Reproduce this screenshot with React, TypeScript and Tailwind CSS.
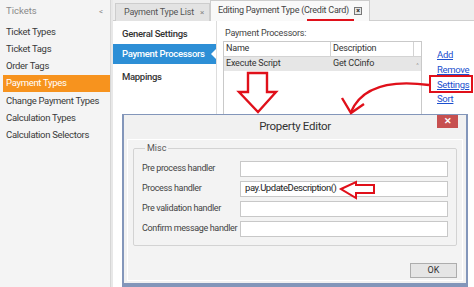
import React from 'react'

const sideItems = [
  'Ticket Types',
  'Ticket Tags',
  'Order Tags',
  'Payment Types',
  'Change Payment Types',
  'Calculation Types',
  'Calculation Selectors',
]

const navItems = ['General Settings', 'Payment Processors', 'Mappings']

const links = ['Add', 'Remove', 'Settings', 'Sort']

const handlers = [
  { label: 'Pre process handler', value: '' },
  { label: 'Process handler', value: 'pay.UpdateDescription()' },
  { label: 'Pre validation handler', value: '' },
  { label: 'Confirm message handler', value: '' },
]

function Sidebar() {
  return (
    <div className="w-[111px] shrink-0 bg-[#f4f4f4] border-r border-[#d6d6d6] pl-[3px] flex flex-col">
      <div className="h-[23px] flex items-center justify-between pl-[3px] pr-[7px] text-[#8a8a8a] text-[9.5px]">
        <span>Tickets</span>
        <span className="text-[8px]">&lt;</span>
      </div>
      {sideItems.map((item) => (
        <div
          key={item}
          className={
            item === 'Payment Types'
              ? 'h-[17.3px] flex items-center pl-[3px] bg-[#f7931e] text-white text-[9.5px] tracking-[-0.3px]'
              : 'h-[17.3px] flex items-center pl-[3px] text-[#3a3a3a] text-[9.5px] tracking-[-0.3px]'
          }
        >
          {item}
        </div>
      ))}
    </div>
  )
}

function Tabs() {
  return (
    <div className="h-[21px] shrink-0 flex items-end bg-[#eeeeee] border-b border-[#cfcfcf] pl-[2px]">
      <div className="h-[18px] w-[95px] flex items-center justify-between pl-[8px] pr-[5px] bg-[#e3e3e3] border border-b-0 border-[#cdcdcd] text-[#555] text-[9px] tracking-[-0.2px] mb-[-1px]">
        <span>Payment Type List</span>
        <span className="text-[8px] text-[#888]">×</span>
      </div>
      <div className="h-[21px] w-[160px] flex items-center pl-[7px] bg-[#f9f9f9] border border-b-0 border-[#cdcdcd] text-[#444] text-[9px] tracking-[-0.25px] mb-[-1px] relative">
        <span>Editing Payment Type (Credit Card)</span>
        <span className="ml-[5px] w-[8px] h-[8px] border border-[#777] bg-[#e8e8e8] flex items-center justify-center text-[7px] leading-none font-bold text-[#222]">
          ×
        </span>
        {/* red annotation underline */}
        <span className="absolute left-[96px] top-[18px] w-[47px] h-[2px] bg-[#e0101a]" />
      </div>
    </div>
  )
}

function Nav() {
  return (
    <div className="w-[104px] shrink-0 bg-white border-r border-[#dddddd] pt-[3px] flex flex-col">
      {navItems.map((item) => (
        <div
          key={item}
          className={
            item === 'Payment Processors'
              ? 'relative h-[20px] flex items-center pl-[9px] bg-[#2d8fd6] text-white text-[9.5px] font-medium tracking-[-0.3px]'
              : item === 'Mappings'
                ? 'h-[20px] mt-[3px] flex items-center pl-[9px] text-[#333] text-[9.5px] font-medium tracking-[-0.3px]'
                : 'h-[20px] flex items-center pl-[9px] text-[#333] text-[9.5px] font-medium tracking-[-0.3px]'
          }
        >
          {item}
          {item === 'Payment Processors' && (
            <span className="absolute right-0 top-[5px] border-y-[5px] border-y-transparent border-r-[5px] border-r-white" />
          )}
        </div>
      ))}
    </div>
  )
}

function Processors() {
  return (
    <div className="flex-1 bg-white flex flex-col pl-[6px] pt-[5px]">
      <div className="h-[15px] flex items-center pl-[2px] text-[#444] text-[9px] tracking-[-0.2px]">
        Payment Processors:
      </div>
      <div className="flex gap-[15px]">
        <div className="w-[199px] h-[80px] border border-[#c9c9c9] flex flex-col text-[9px] tracking-[-0.2px] text-[#333]">
          <div className="h-[15px] flex border-b border-[#d3d3d3]">
            <div className="w-[107px] pl-[2px] flex items-center border-r border-[#d3d3d3]">Name</div>
            <div className="w-[83px] pl-[2px] flex items-center border-r border-[#d3d3d3]">Description</div>
            <div className="flex-1" />
          </div>
          <div className="h-[14px] flex bg-[#e6e6e6]">
            <div className="w-[107px] pl-[2px] flex items-center">Execute Script</div>
            <div className="w-[83px] pl-[2px] flex items-center">Get CCinfo</div>
            <div className="flex-1 flex items-center justify-center text-[6px] text-[#999]">^</div>
          </div>
        </div>
        <div className="flex flex-col pt-[7px]">
          {links.map((l) => (
            <div key={l} className="h-[14.7px] flex items-center text-[9.5px] tracking-[-0.3px] text-[#1b4fce] underline">
              {l}
            </div>
          ))}
        </div>
      </div>
    </div>
  )
}

function PropertyEditor() {
  return (
    <div className="absolute left-[122px] top-[114px] w-[346px] h-[173px] bg-[#dfe5ef] border-x-2 border-t border-b-4 border-[#8396ba] flex flex-col">
      <div className="h-[24px] shrink-0 bg-[#f1f1f1] relative flex items-center justify-center text-[#333] text-[11.5px] tracking-[-0.3px]">
        Property Editor
        <div className="absolute right-[8px] top-0 w-[21px] h-[13px] bg-[#c75050] flex items-center justify-center text-white text-[9px] font-bold leading-none">
          ✕
        </div>
      </div>
      <div className="flex-1 bg-[#f1f1f1] px-[3px] pb-[2px] flex flex-col">
        <div className="flex-1 border border-white bg-[#f3f3f3] flex flex-col px-[5px]">
          <fieldset className="mt-[2px] border border-[#d3d3d3] rounded-[2px] px-[8px] pb-[8px] flex flex-col gap-[4px]">
            <legend className="ml-[3px] px-[2px] text-[9px] text-[#555]">Misc</legend>
            <div className="h-[1px]" />
            {handlers.map((h) => (
              <div key={h.label} className="flex items-center h-[16px]">
                <div className="w-[98px] shrink-0 whitespace-nowrap text-[9px] tracking-[-0.35px] text-[#444]">{h.label}</div>
                <div className="flex-1 h-[16px] bg-white border border-[#c8c8c8] flex items-center pl-[4px] text-[9.5px] tracking-[-0.45px] text-[#222]">
                  {h.value}
                </div>
              </div>
            ))}
          </fieldset>
          <div className="flex-1 flex items-end justify-end pb-[2px]">
            <div className="w-[47px] h-[15px] bg-[#e5e5e5] border border-[#adadad] flex items-center justify-center text-[9px] text-[#333]">
              OK
            </div>
          </div>
        </div>
      </div>
    </div>
  )
}

function Annotations() {
  return (
    <svg className="absolute left-0 top-0 pointer-events-none" width="474" height="287" viewBox="0 0 474 287">
      <g fill="none" stroke="#e0101a" strokeWidth="2.4" strokeLinejoin="miter">
        <polygon points="248,73 267,73 267,92 276,92 258,112 239,92 248,92" />
        <path d="M429 85 C 392 80, 362 86, 351 112" />
        <path d="M342 98 L351 113 L364 104" />
        <polygon points="341,189 356,182 356,185 374,185 374,193 356,193 356,198" strokeWidth="2" />
      </g>
      <rect x="430" y="76" width="42" height="16" fill="none" stroke="#e0101a" strokeWidth="2" />
    </svg>
  )
}

export default function App() {
  return (
    <div className="relative w-[474px] h-[287px] overflow-hidden bg-[#e8e8e8] flex font-['Roboto',sans-serif]">
      <Sidebar />
      <div className="flex-1 ml-[2px] flex flex-col">
        <Tabs />
        <div className="flex-1 flex">
          <Nav />
          <Processors />
        </div>
      </div>
      <PropertyEditor />
      <Annotations />
    </div>
  )
}
